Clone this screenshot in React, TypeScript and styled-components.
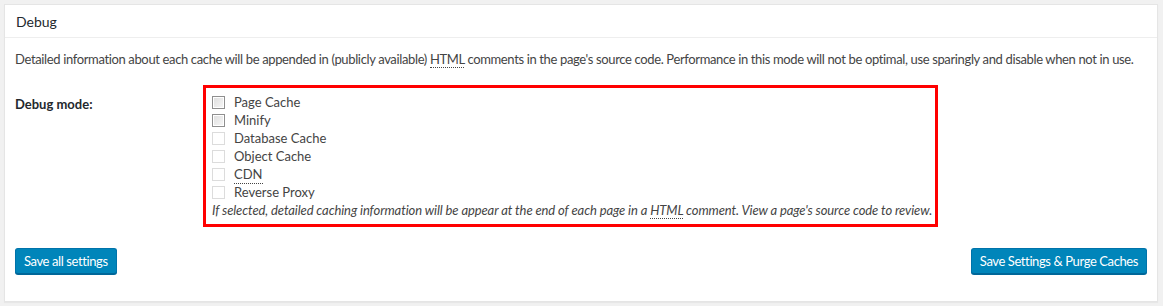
import React from "react";
import styled, { createGlobalStyle } from "styled-components";

const Global = createGlobalStyle`
  html, body { margin: 0; padding: 0; background: #f1f1f1; }
  body { font-family: Lato, "Noto Sans", sans-serif; font-size: 13px; color: #444; letter-spacing: -0.2px; }
`;

const Page = styled.div`
  padding: 4px 5px 5px 4px;
`;

const Postbox = styled.div`
  background: #fff;
  border: 1px solid #e5e5e5;
  box-shadow: 0 1px 1px rgba(0, 0, 0, 0.04);
`;

const Header = styled.h3`
  margin: 0;
  height: 32px;
  display: flex;
  align-items: center;
  padding: 0 11px;
  font-size: 14px;
  font-weight: 400;
  color: #23282d;
  letter-spacing: 0;
  border-bottom: 1px solid #eee;
`;

const Inside = styled.div`
  padding: 12px 10px 27px 10px;
`;

const Desc = styled.p`
  margin: 0;
  line-height: 18px;
  white-space: nowrap;
  letter-spacing: -0.36px;
`;

const Abbr = styled.abbr`
  text-decoration: none;
  border-bottom: 1px dotted #444;
`;

const Row = styled.div`
  display: flex;
  margin-top: 17px;
`;

const Label = styled.div`
  width: 188px;
  padding-top: 10px;
  font-weight: 700;
  color: #23282d;
  line-height: 18px;
  letter-spacing: 0;
`;

const Highlight = styled.div`
  width: 723px;
  border: 3px solid #ff0000;
  padding: 5px 0 5px 6px;
  box-sizing: content-box;
`;

const CheckRow = styled.label`
  display: flex;
  align-items: center;
  height: 18px;
  line-height: 18px;
  letter-spacing: 0;
`;

const Box = styled.span<{ $disabled?: boolean }>`
  width: 11px;
  height: 11px;
  border: 1px solid ${(p) => (p.$disabled ? "#dcdcdc" : "#8f8f8f")};
  background: ${(p) => (p.$disabled ? "#fff" : "linear-gradient(135deg, #dedede, #f7f7f7)")};
  box-shadow: ${(p) => (p.$disabled ? "none" : "inset 0 0 0 1px #fff")};
  margin-right: 9px;
  flex-shrink: 0;
`;

const Hint = styled.p`
  margin: 0;
  font-style: italic;
  line-height: 18px;
  white-space: nowrap;
  letter-spacing: -0.1px;
`;

const Actions = styled.div`
  display: flex;
  justify-content: space-between;
  margin-top: 21px;
`;

const Button = styled.button`
  height: 26px;
  padding: 0 8px 1px;
  font-family: inherit;
  font-size: 13px;
  letter-spacing: -0.4px;
  color: #fff;
  background: #0085ba;
  border: 1px solid #0073aa;
  border-bottom-color: #006799;
  border-radius: 3px;
  box-shadow: 0 1px 0 #006799;
  cursor: pointer;
`;

const items = [
  { label: "Page Cache", disabled: false },
  { label: "Minify", disabled: false },
  { label: "Database Cache", disabled: true },
  { label: "Object Cache", disabled: true },
  { label: "CDN", disabled: true, abbr: true },
  { label: "Reverse Proxy", disabled: true },
];

export default function App() {
  return (
    <>
      <Global />
      <Page>
        <Postbox>
          <Header>Debug</Header>
          <Inside>
            <Desc>
              Detailed information about each cache will be appended in (publicly available) <Abbr>HTML</Abbr> comments in the page's source code. Performance in this mode will not be optimal, use sparingly and disable when not in use.
            </Desc>
            <Row>
              <Label>Debug mode:</Label>
              <Highlight>
                {items.map((it) => (
                  <CheckRow key={it.label}>
                    <Box $disabled={it.disabled} />
                    {it.abbr ? <Abbr>{it.label}</Abbr> : it.label}
                  </CheckRow>
                ))}
                <Hint>
                  If selected, detailed caching information will be appear at the end of each page in a <Abbr>HTML</Abbr> comment. View a page's source code to review.
                </Hint>
              </Highlight>
            </Row>
            <Actions>
              <Button>Save all settings</Button>
              <Button>Save Settings &amp; Purge Caches</Button>
            </Actions>
          </Inside>
        </Postbox>
      </Page>
    </>
  );
}
